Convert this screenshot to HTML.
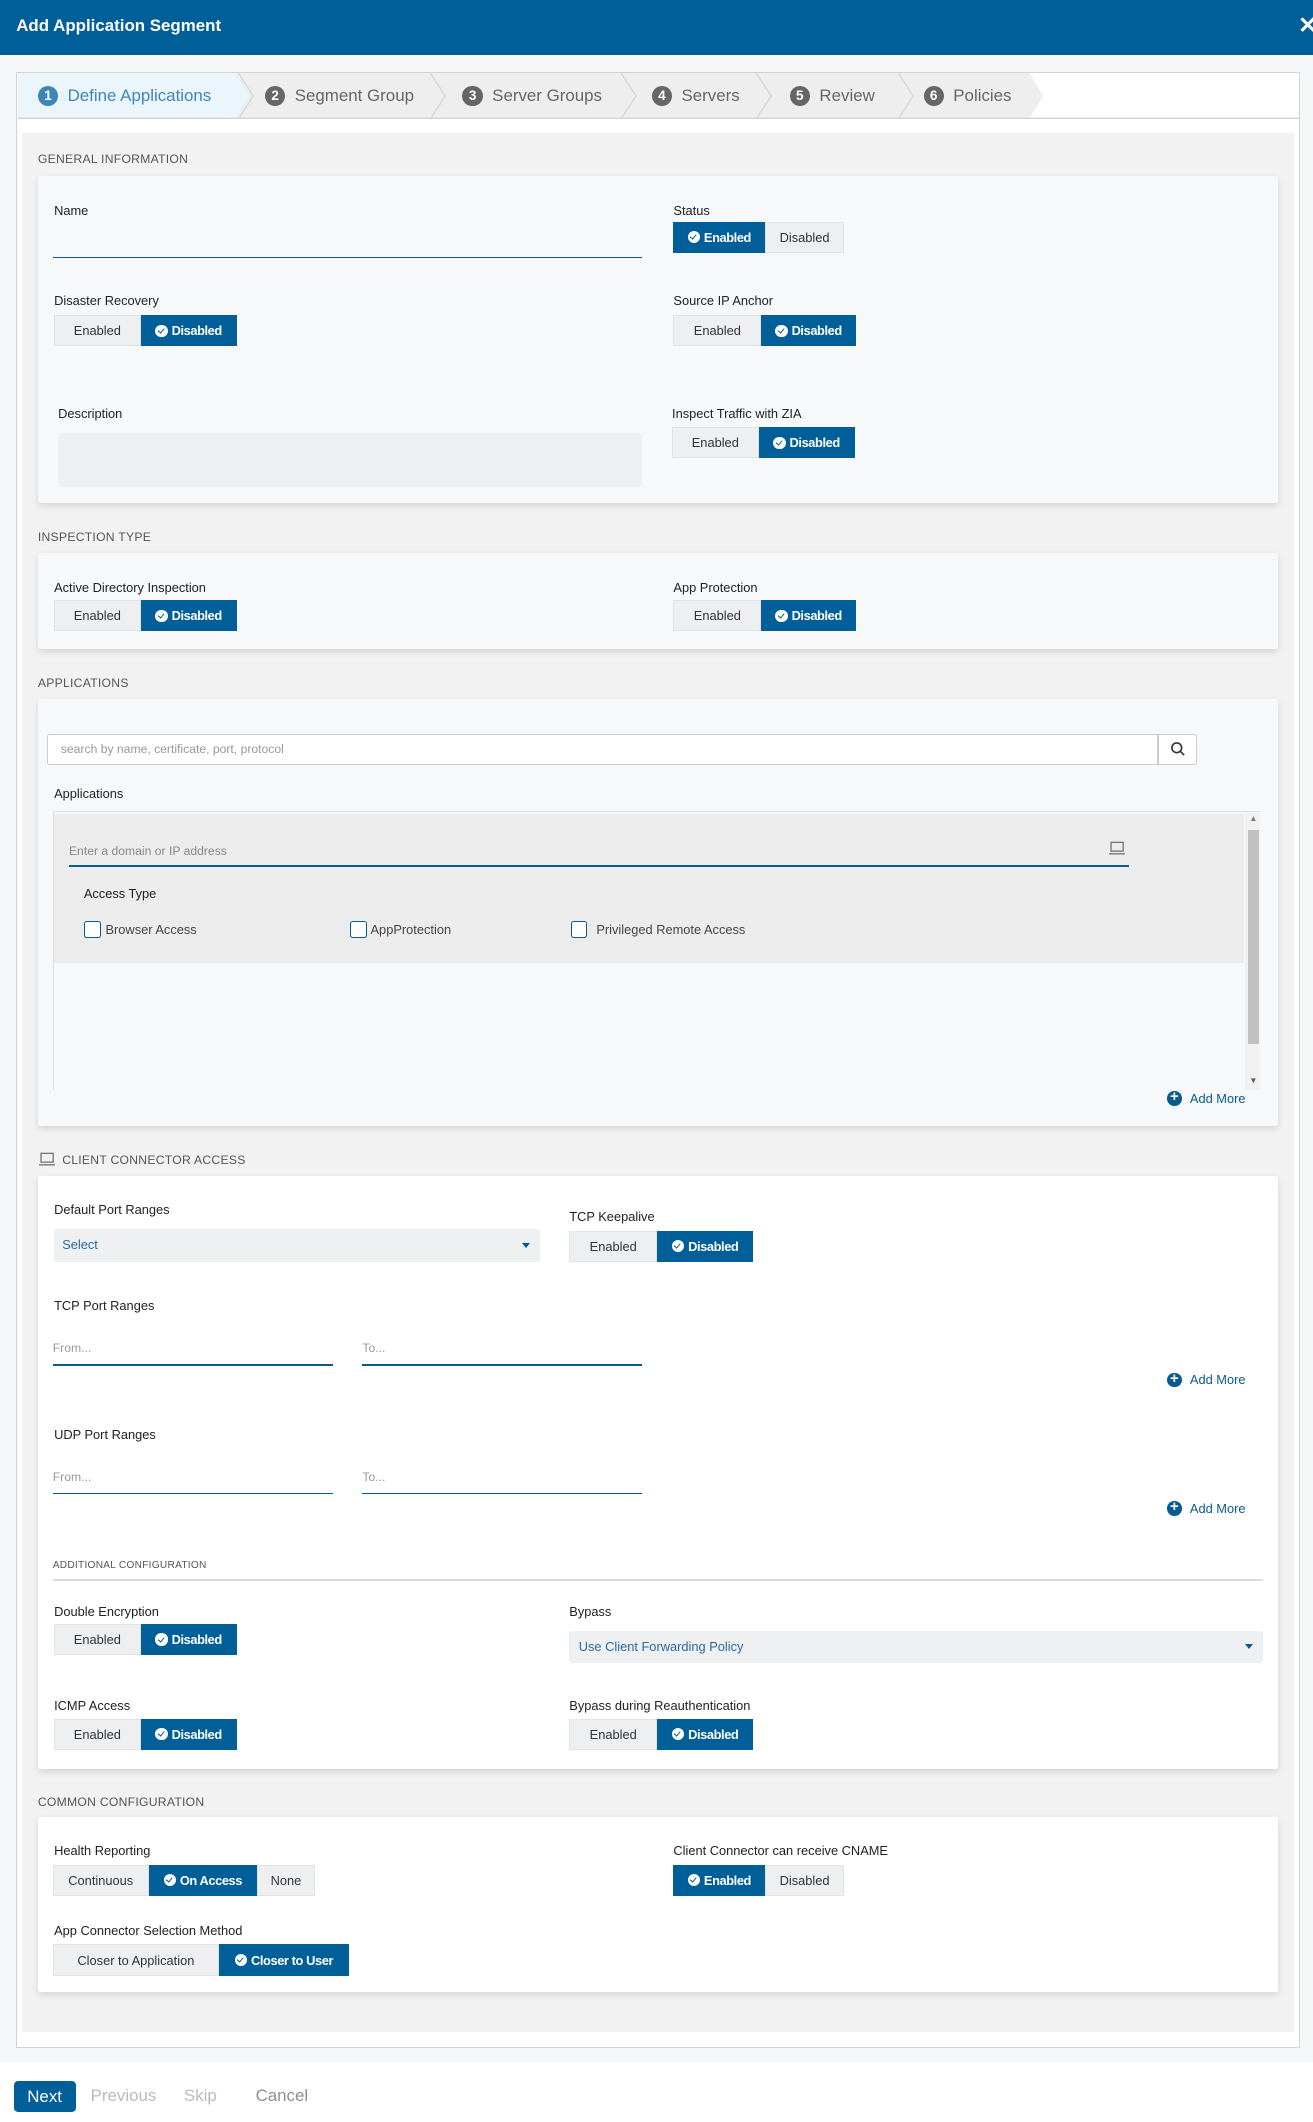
<!DOCTYPE html>
<html><head><meta charset="utf-8">
<style>
html,body{margin:0;padding:0;}
body{width:1313px;height:2121px;overflow:hidden;background:#f6f7f9;font-family:"Liberation Sans",sans-serif;}
#z{zoom:1.3522;position:relative;width:971px;height:1569px;}
.a{position:absolute;}
.hd{left:0;top:0;width:971px;height:41px;background:#005e98;color:#fff;font-weight:bold;font-size:12.5px;}
.lbl{position:absolute;font-size:9.5px;color:#222;line-height:12px;white-space:nowrap;}
.sec{position:absolute;font-size:9px;color:#555;line-height:12px;letter-spacing:.2px;white-space:nowrap;}
.card{position:absolute;background:#f7f8fa;box-shadow:0 2px 5px rgba(0,0,0,.12);border-radius:2px;}
.wcard{position:absolute;background:#fff;box-shadow:0 2px 5px rgba(0,0,0,.12);border-radius:2px;}
.tg{position:absolute;display:flex;height:23px;font-size:9.5px;}
.tg span{display:flex;align-items:center;justify-content:center;height:23px;box-sizing:border-box;background:#eeeff1;color:#333;border:1px solid #e2e3e5;}
.tg span.on{background:#005e98;color:#fff;font-weight:bold;border-color:#005e98;letter-spacing:-.3px;}
.tg span.on i{display:inline-block;width:9px;height:9px;border-radius:50%;background:#fff;margin-right:3px;position:relative;}
.tg span.on i:after{content:"";position:absolute;left:2.6px;top:1.6px;width:2.2px;height:4px;border:solid #005e98;border-width:0 1.3px 1.3px 0;transform:rotate(40deg);}
.ul{position:absolute;height:1px;background:#0a5a92;}
.ph{position:absolute;font-size:9px;color:#999;white-space:nowrap;}
.add{position:absolute;font-size:9.5px;color:#0a5a92;white-space:nowrap;display:flex;align-items:center;}
.add b{display:inline-block;width:11px;height:11px;border-radius:50%;background:#0a5a92;color:#fff;font-size:11px;line-height:10px;text-align:center;margin-right:6px;}
.cb{position:absolute;width:11px;height:11px;border:1px solid #0a5a92;border-radius:2px;background:#fff;}
.tab{position:absolute;top:54px;height:34px;display:flex;align-items:center;font-size:12.5px;color:#666;}
.num{display:inline-block;width:15px;height:15px;border-radius:50%;background:#666;color:#fff;font-size:10px;font-weight:bold;text-align:center;line-height:15px;margin-right:7px;}
</style></head><body><div id="z">
<div class="a hd"><span class="a" style="left:12px;top:12px">Add Application Segment</span><span class="a" style="left:960px;top:9px;font-size:17px">✕</span></div>

<div class="a" style="left:12px;top:53px;width:948px;height:1460px;border:1px solid #d3d3d3;background:#fff"></div>
<!-- tabs -->
<svg class="a" style="left:13px;top:54px" width="948" height="34">
<rect x="0" y="0" width="948" height="34" fill="#fff"/>
<polygon points="0,0 748,0 758,17 748,34 0,34" fill="#eeeeee"/>
<polygon points="0,0 160,0 171,17 160,34 0,34" fill="#ebf5fc"/>
<g stroke="#d6d6d6" fill="none"><polyline points="163,0 174,17 163,34"/><polyline points="305,0 316,17 305,34"/><polyline points="446,0 457,17 446,34"/><polyline points="546,0 557,17 546,34"/><polyline points="651,0 662,17 651,34"/></g>
<line x1="0" y1="33.5" x2="948" y2="33.5" stroke="#d3d3d3"/>
</svg>
<div class="tab" style="left:28px;color:#3d86b8"><span class="num" style="background:#3d86b8">1</span>Define Applications</div>
<div class="tab" style="left:196px"><span class="num">2</span>Segment Group</div>
<div class="tab" style="left:342px"><span class="num">3</span>Server Groups</div>
<div class="tab" style="left:482px"><span class="num">4</span>Servers</div>
<div class="tab" style="left:584px"><span class="num">5</span>Review</div>
<div class="tab" style="left:683px"><span class="num">6</span>Policies</div>

<div class="a" style="left:16px;top:98px;width:941px;height:1405px;background:#f2f2f2"></div>

<!-- general -->
<div class="sec" style="left:28px;top:112px">GENERAL INFORMATION</div>
<div class="card" style="left:28px;top:130px;width:917px;height:242px"></div>
<div class="lbl" style="left:40px;top:150px">Name</div>
<div class="ul" style="left:39px;top:190px;width:436px"></div>
<div class="lbl" style="left:498px;top:150px">Status</div>
<div class="tg" style="left:498px;top:164px"><span class="on" style="width:68px"><i></i>Enabled</span><span style="width:58px">Disabled</span></div>
<div class="lbl" style="left:40px;top:217px">Disaster Recovery</div>
<div class="tg" style="left:40px;top:233px"><span style="width:64px">Enabled</span><span class="on" style="width:71px"><i></i>Disabled</span></div>
<div class="lbl" style="left:498px;top:217px">Source IP Anchor</div>
<div class="tg" style="left:498px;top:233px"><span style="width:65px">Enabled</span><span class="on" style="width:70px"><i></i>Disabled</span></div>
<div class="lbl" style="left:43px;top:300px">Description</div>
<div class="a" style="left:43px;top:320px;width:432px;height:40px;background:#eeeff1;border-radius:2px"></div>
<div class="lbl" style="left:497px;top:300px">Inspect Traffic with ZIA</div>
<div class="tg" style="left:497px;top:316px"><span style="width:64px">Enabled</span><span class="on" style="width:71px"><i></i>Disabled</span></div>

<!-- inspection -->
<div class="sec" style="left:28px;top:391px">INSPECTION TYPE</div>
<div class="card" style="left:28px;top:409px;width:917px;height:71px"></div>
<div class="lbl" style="left:40px;top:429px">Active Directory Inspection</div>
<div class="tg" style="left:40px;top:444px"><span style="width:64px">Enabled</span><span class="on" style="width:71px"><i></i>Disabled</span></div>
<div class="lbl" style="left:498px;top:429px">App Protection</div>
<div class="tg" style="left:498px;top:444px"><span style="width:65px">Enabled</span><span class="on" style="width:70px"><i></i>Disabled</span></div>

<!-- applications -->
<div class="sec" style="left:28px;top:499px">APPLICATIONS</div>
<div class="card" style="left:28px;top:517px;width:917px;height:316px"></div>
<div class="a" style="left:35px;top:543px;width:850px;height:23px;background:#fff;border:1px solid #ccc;border-radius:2px;box-sizing:border-box"></div>
<div class="a" style="left:856px;top:543px;width:1px;height:23px;background:#ccc"></div>
<svg class="a" style="left:865px;top:548px" width="12" height="12"><circle cx="5" cy="5" r="3.6" stroke="#333" stroke-width="1.2" fill="none"/><line x1="7.7" y1="7.7" x2="10.5" y2="10.5" stroke="#333" stroke-width="1.2"/></svg>
<div class="ph" style="left:45px;top:549px">search by name, certificate, port, protocol</div>
<div class="lbl" style="left:40px;top:581px">Applications</div>
<div class="a" style="left:39px;top:600px;width:893px;height:206px;border-top:1px solid #ddd;border-left:1px solid #ddd;box-sizing:border-box"></div>
<div class="a" style="left:40px;top:602px;width:880px;height:110px;background:#ececec"></div>
<div class="a" style="left:921px;top:601px;width:11px;height:205px;background:#f1f1f1"></div>
<div class="a" style="left:923px;top:614px;width:8px;height:158px;background:#c1c1c1"></div>
<div class="a" style="left:924px;top:602px;font-size:6px;color:#777">▲</div>
<div class="a" style="left:924px;top:796px;font-size:6px;color:#555">▼</div>
<div class="ph" style="left:51px;top:624px;color:#888">Enter a domain or IP address</div>
<div class="ul" style="left:51px;top:640px;width:784px;height:1.5px"></div>
<svg class="a" style="left:820px;top:622px" width="12" height="11"><rect x="1.5" y="1" width="9" height="6.5" fill="none" stroke="#777"/><line x1="0" y1="9.5" x2="12" y2="9.5" stroke="#777"/></svg>
<div class="lbl" style="left:62px;top:655px">Access Type</div>
<div class="cb" style="left:62px;top:681px"></div><div class="lbl" style="left:78px;top:682px;color:#444">Browser Access</div>
<div class="cb" style="left:259px;top:681px"></div><div class="lbl" style="left:274px;top:682px;color:#444">AppProtection</div>
<div class="cb" style="left:422px;top:681px"></div><div class="lbl" style="left:441px;top:682px;color:#444">Privileged Remote Access</div>
<div class="add" style="left:863px;top:807px"><b>+</b>Add More</div>

<!-- client connector -->
<svg class="a" style="left:29px;top:852px" width="12" height="11"><rect x="1.5" y="1" width="9" height="6.5" fill="none" stroke="#777"/><line x1="0" y1="9.5" x2="12" y2="9.5" stroke="#777"/></svg>
<div class="sec" style="left:46px;top:852px">CLIENT CONNECTOR ACCESS</div>
<div class="wcard" style="left:28px;top:870px;width:917px;height:438px"></div>
<div class="lbl" style="left:40px;top:889px">Default Port Ranges</div>
<div class="a" style="left:40px;top:909px;width:359px;height:24px;background:#eff0f2;border-radius:2px"></div>
<div class="lbl" style="left:46px;top:915px;color:#2b6aa0">Select</div>
<div class="a" style="left:386px;top:919px;width:0;height:0;border-left:3.5px solid transparent;border-right:3.5px solid transparent;border-top:4px solid #0a5a92"></div>
<div class="lbl" style="left:421px;top:894px">TCP Keepalive</div>
<div class="tg" style="left:421px;top:910px"><span style="width:65px">Enabled</span><span class="on" style="width:71px"><i></i>Disabled</span></div>
<div class="lbl" style="left:40px;top:960px">TCP Port Ranges</div>
<div class="ph" style="left:39px;top:992px">From...</div><div class="ul" style="left:39px;top:1009px;width:207px"></div>
<div class="ph" style="left:268px;top:992px">To...</div><div class="ul" style="left:268px;top:1009px;width:207px"></div>
<div class="add" style="left:863px;top:1015px"><b>+</b>Add More</div>
<div class="lbl" style="left:40px;top:1055px">UDP Port Ranges</div>
<div class="ph" style="left:39px;top:1087px">From...</div><div class="ul" style="left:39px;top:1104px;width:207px"></div>
<div class="ph" style="left:268px;top:1087px">To...</div><div class="ul" style="left:268px;top:1104px;width:207px"></div>
<div class="add" style="left:863px;top:1110px"><b>+</b>Add More</div>
<div class="sec" style="left:39px;top:1152px;font-size:7.5px">ADDITIONAL CONFIGURATION</div>
<div class="a" style="left:39px;top:1168px;width:895px;height:1px;background:#ddd"></div>
<div class="lbl" style="left:40px;top:1186px">Double Encryption</div>
<div class="tg" style="left:40px;top:1201px"><span style="width:64px">Enabled</span><span class="on" style="width:71px"><i></i>Disabled</span></div>
<div class="lbl" style="left:421px;top:1186px">Bypass</div>
<div class="a" style="left:421px;top:1206px;width:513px;height:24px;background:#eff0f2;border-radius:2px"></div>
<div class="lbl" style="left:428px;top:1212px;color:#2b6aa0">Use Client Forwarding Policy</div>
<div class="a" style="left:921px;top:1216px;width:0;height:0;border-left:3.5px solid transparent;border-right:3.5px solid transparent;border-top:4px solid #0a5a92"></div>
<div class="lbl" style="left:40px;top:1256px">ICMP Access</div>
<div class="tg" style="left:40px;top:1271px"><span style="width:64px">Enabled</span><span class="on" style="width:71px"><i></i>Disabled</span></div>
<div class="lbl" style="left:421px;top:1256px">Bypass during Reauthentication</div>
<div class="tg" style="left:421px;top:1271px"><span style="width:65px">Enabled</span><span class="on" style="width:71px"><i></i>Disabled</span></div>

<!-- common -->
<div class="sec" style="left:28px;top:1327px">COMMON CONFIGURATION</div>
<div class="wcard" style="left:28px;top:1344px;width:917px;height:129px"></div>
<div class="lbl" style="left:40px;top:1363px">Health Reporting</div>
<div class="tg" style="left:39px;top:1379px"><span style="width:71px">Continuous</span><span class="on" style="width:80px"><i></i>On Access</span><span style="width:43px">None</span></div>
<div class="lbl" style="left:498px;top:1363px">Client Connector can receive CNAME</div>
<div class="tg" style="left:498px;top:1379px"><span class="on" style="width:68px"><i></i>Enabled</span><span style="width:58px">Disabled</span></div>
<div class="lbl" style="left:40px;top:1422px">App Connector Selection Method</div>
<div class="tg" style="left:39px;top:1438px"><span style="width:123px">Closer to Application</span><span class="on" style="width:96px"><i></i>Closer to User</span></div>

<!-- footer -->
<div class="a" style="left:0;top:1525px;width:971px;height:44px;background:#fff"></div>
<div class="a" style="left:10px;top:1539px;width:46px;height:23px;background:#005e98;border-radius:3px;color:#fff;font-size:12.5px;text-align:center;line-height:23px">Next</div>
<div class="a" style="left:67px;top:1543px;font-size:12.5px;color:#b5bcc5">Previous</div>
<div class="a" style="left:136px;top:1543px;font-size:12.5px;color:#b5bcc5">Skip</div>
<div class="a" style="left:189px;top:1543px;font-size:12.5px;color:#8a9099">Cancel</div>
</div></body></html>
